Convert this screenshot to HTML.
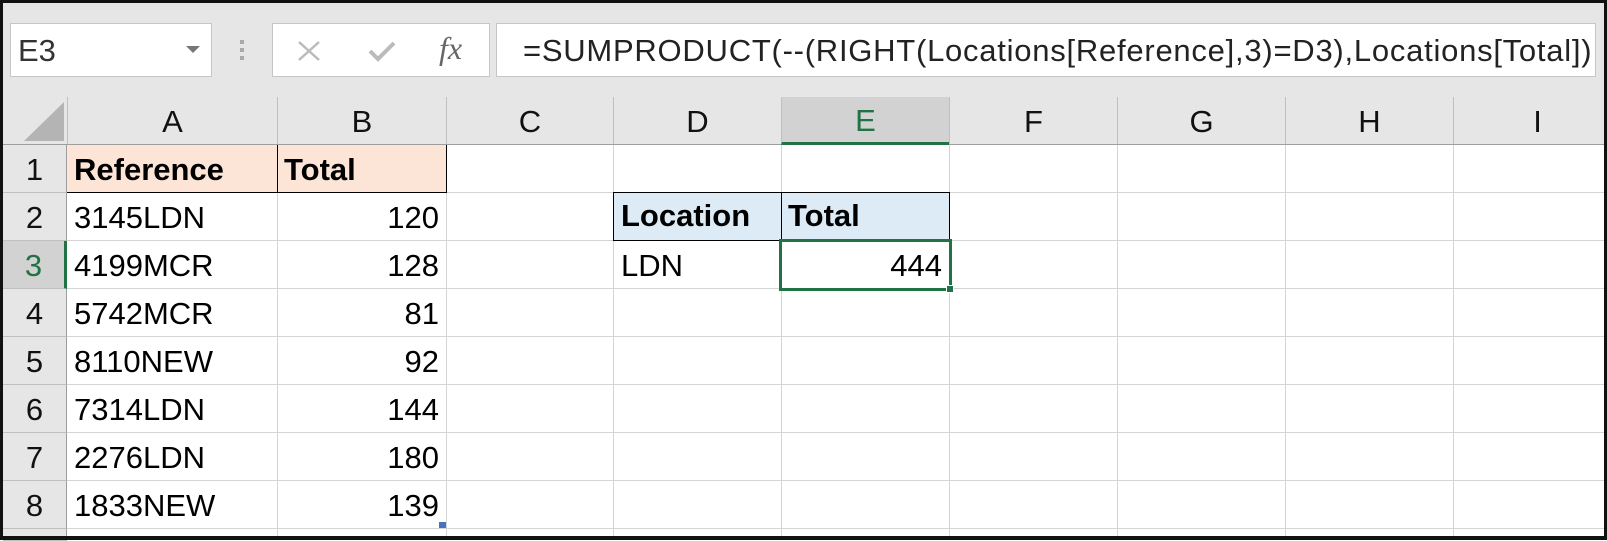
<!DOCTYPE html>
<html><head><style>
*{margin:0;padding:0;box-sizing:border-box}
body{width:1607px;height:540px;background:#fff;font-family:"Liberation Sans",sans-serif;position:relative;overflow:hidden}
.frame{position:absolute;left:0;top:0;width:1607px;height:540px;border:3px solid #111;border-bottom-width:4px;pointer-events:none;z-index:10}
.top{position:absolute;left:0;top:0;width:1607px;height:97px;background:#e6e6e6}
.box{position:absolute;background:#fff;border:1px solid #c6c6c6}
.a{position:absolute}
.hdr{position:absolute;top:97px;height:48px;background:#e6e6e6;border-bottom:1px solid #9e9e9e}
.ch{position:absolute;top:97px;height:47px;font-size:31px;text-align:center;line-height:49px;color:#111;border-left:1px solid #c0c0c0}
.rh{position:absolute;left:3px;width:64px;background:#e6e6e6;font-size:31px;text-align:center;color:#111;border-bottom:1px solid #c0c0c0;border-right:1px solid #9e9e9e}
.vl{position:absolute;top:145px;width:1px;height:395px;background:#d4d4d4}
.hl{position:absolute;left:67px;width:1548px;height:1px;background:#d4d4d4}
.c{position:absolute;font-size:31px;line-height:52px;height:48px;padding:0 7px;color:#000;white-space:nowrap}
.r{text-align:right}
.b{font-weight:bold}
</style></head><body>
<div class="top"></div>
<div class="box" style="left:10px;top:23px;width:202px;height:54px"></div>
<div class="a" style="left:18px;top:33px;font-size:31px;color:#333">E3</div>
<div class="a" style="left:186px;top:46px;width:0;height:0;border-left:7px solid transparent;border-right:7px solid transparent;border-top:7px solid #777"></div>
<div class="a" style="left:240px;top:40px;width:4px;height:4px;background:#aaa;box-shadow:0 8px 0 #aaa,0 16px 0 #aaa"></div>
<div class="box" style="left:272px;top:23px;width:218px;height:54px"></div>
<svg class="a" style="left:297px;top:40px" width="24" height="22"><path d="M2 2L22 20M22 2L2 20" stroke="#bbb" stroke-width="2.5"/></svg>
<svg class="a" style="left:368px;top:40px" width="28" height="22"><path d="M2 11L10 19L26 3" stroke="#bbb" stroke-width="4" fill="none"/></svg>
<div class="a" style="left:439px;top:30px;font-family:'Liberation Serif',serif;font-style:italic;font-size:32px;color:#666">fx</div>
<div class="box" style="left:496px;top:23px;width:1100px;height:54px"></div>
<div class="a" style="left:523px;top:33px;font-size:31px;color:#222;letter-spacing:0.75px;white-space:nowrap">=SUMPRODUCT(--(RIGHT(Locations[Reference],3)=D3),Locations[Total])</div>
<div class="hdr" style="left:0;width:1607px"></div>
<svg class="a" style="left:22px;top:100px" width="44" height="42"><path d="M42 2L42 41L2 41Z" fill="#b4b4b4"/></svg>
<div class="ch" style="left:67px;width:210px">A</div>
<div class="ch" style="left:277px;width:169px">B</div>
<div class="ch" style="left:446px;width:167px">C</div>
<div class="ch" style="left:613px;width:168px">D</div>
<div class="ch" style="left:781px;width:168px;background:#d2d2d2;color:#217346;border-bottom:3px solid #217346;height:48px;line-height:47px">E</div>
<div class="ch" style="left:949px;width:168px">F</div>
<div class="ch" style="left:1117px;width:168px">G</div>
<div class="ch" style="left:1285px;width:168px">H</div>
<div class="ch" style="left:1453px;width:168px">I</div>
<div class="vl" style="left:277px"></div><div class="vl" style="left:446px"></div><div class="vl" style="left:613px"></div><div class="vl" style="left:781px"></div><div class="vl" style="left:949px"></div><div class="vl" style="left:1117px"></div><div class="vl" style="left:1285px"></div><div class="vl" style="left:1453px"></div>
<div class="hl" style="top:192px"></div><div class="hl" style="top:240px"></div><div class="hl" style="top:288px"></div><div class="hl" style="top:336px"></div><div class="hl" style="top:384px"></div><div class="hl" style="top:432px"></div><div class="hl" style="top:480px"></div><div class="hl" style="top:528px"></div>
<div class="rh" style="top:145px;height:48px;line-height:50px">1</div>
<div class="rh" style="top:193px;height:48px;line-height:50px">2</div>
<div class="rh" style="top:241px;height:48px;line-height:50px;background:#d2d2d2;color:#217346;border-right:3px solid #217346">3</div>
<div class="rh" style="top:289px;height:48px;line-height:50px">4</div>
<div class="rh" style="top:337px;height:48px;line-height:50px">5</div>
<div class="rh" style="top:385px;height:48px;line-height:50px">6</div>
<div class="rh" style="top:433px;height:48px;line-height:50px">7</div>
<div class="rh" style="top:481px;height:48px;line-height:50px">8</div>
<div class="rh" style="top:529px;height:12px"></div>
<div class="a" style="left:67px;top:145px;width:380px;height:48px;background:#fce4d6;border-bottom:1px solid #000;border-right:1px solid #000"></div>
<div class="a" style="left:277px;top:145px;width:1px;height:48px;background:#000"></div>
<div class="c b" style="left:67px;top:144px">Reference</div>
<div class="c b" style="left:277px;top:144px">Total</div>
<div class="c" style="left:67px;top:192px">3145LDN</div><div class="c r" style="left:277px;top:192px;width:169px">120</div>
<div class="c" style="left:67px;top:240px">4199MCR</div><div class="c r" style="left:277px;top:240px;width:169px">128</div>
<div class="c" style="left:67px;top:288px">5742MCR</div><div class="c r" style="left:277px;top:288px;width:169px">81</div>
<div class="c" style="left:67px;top:336px">8110NEW</div><div class="c r" style="left:277px;top:336px;width:169px">92</div>
<div class="c" style="left:67px;top:384px">7314LDN</div><div class="c r" style="left:277px;top:384px;width:169px">144</div>
<div class="c" style="left:67px;top:432px">2276LDN</div><div class="c r" style="left:277px;top:432px;width:169px">180</div>
<div class="c" style="left:67px;top:480px">1833NEW</div><div class="c r" style="left:277px;top:480px;width:169px">139</div>
<div class="a" style="left:439px;top:522px;width:7px;height:6px;background:#4472c4"></div>
<div class="a" style="left:613px;top:192px;width:337px;height:49px;background:#ddebf7;border:1px solid #000"></div>
<div class="a" style="left:781px;top:192px;width:1px;height:49px;background:#000"></div>
<div class="c b" style="left:614px;top:190px">Location</div>
<div class="c b" style="left:781px;top:190px">Total</div>
<div class="c" style="left:614px;top:240px">LDN</div>
<div class="a" style="left:779px;top:239px;width:173px;height:52px;border:3px solid #217346"></div>
<div class="c r" style="left:781px;top:240px;width:168px">444</div>
<div class="a" style="left:946px;top:285px;width:8px;height:8px;background:#217346;border:1px solid #fff"></div>
<div class="frame"></div>
</body></html>
